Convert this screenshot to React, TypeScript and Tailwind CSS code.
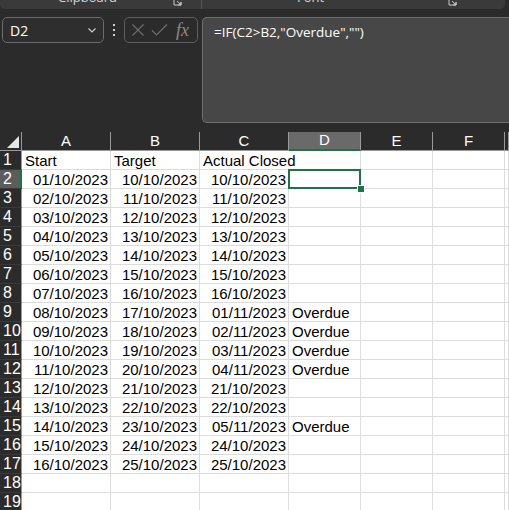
import React from 'react';

const starts = Array.from({ length: 16 }, (_, i) => `${String(i + 1).padStart(2, '0')}/10/2023`);
const targets = Array.from({ length: 16 }, (_, i) => `${String(i + 10).padStart(2, '0')}/10/2023`);
const actuals = [
  '10/10/2023', '11/10/2023', '12/10/2023', '13/10/2023', '14/10/2023', '15/10/2023', '16/10/2023',
  '01/11/2023', '02/11/2023', '03/11/2023', '04/11/2023', '21/10/2023', '22/10/2023', '05/11/2023',
  '24/10/2023', '25/10/2023',
];

const toDate = (s: string) => {
  const [d, m, y] = s.split('/').map(Number);
  return new Date(y, m - 1, d).getTime();
};

const cols = ['A', 'B', 'C', 'D', 'E', 'F', ''];

const Launcher = () => (
  <svg width="9" height="9" viewBox="0 0 9 9" className="text-[#c8c8c8]">
    <path d="M1 1h3M1 1v7h7V5" stroke="currentColor" fill="none" strokeWidth="1" />
    <path d="M4 4l4 4M8 5v3H5" stroke="currentColor" fill="none" strokeWidth="1" />
  </svg>
);

export default function App() {
  const rows: string[][] = [['Start', 'Target', 'Actual Closed', '', '', '', '']];
  for (let i = 0; i < 16; i++) {
    rows.push([starts[i], targets[i], actuals[i], toDate(actuals[i]) > toDate(targets[i]) ? 'Overdue' : '', '', '', '']);
  }
  rows.push(['', '', '', '', '', '', '']);
  rows.push(['', '', '', '', '', '', '']);

  return (
    <div className="w-[509px] h-[510px] overflow-hidden bg-[#2b2b2b] flex flex-col" style={{ fontFamily: '"Open Sans", "Noto Sans", sans-serif' }}>
      {/* ribbon bottom edge */}
      <div className="h-[9px] w-[505px] shrink-0 bg-[#3a3a3a] rounded-b-[5px] overflow-hidden flex text-[#d6d6d6] text-[13px] leading-none">
        <div className="w-[202px] border-r border-[#555] flex items-start">
          <span className="ml-[58px] -mt-[9px]">Clipboard</span>
          <span className="ml-[56px] -mt-[3px]"><Launcher /></span>
        </div>
        <div className="flex-1 flex items-start">
          <span className="ml-[95px] -mt-[9px]">Font</span>
          <span className="ml-[124px] -mt-[3px]"><Launcher /></span>
        </div>
      </div>

      {/* formula bar */}
      <div className="flex items-start pt-[8px] shrink-0">
        <div className="ml-[2px] w-[102px] h-[26px] rounded-[5px] border border-[#6b6b6b] bg-[#2e2e2e] flex items-center justify-between pl-[7px] pr-[6px] text-white text-[14px]">
          <span>D2</span>
          <svg width="10" height="10" viewBox="0 0 10 10">
            <path d="M1.5 3.5l3.5 3.5 3.5-3.5" stroke="#d0d0d0" fill="none" strokeWidth="1.1" />
          </svg>
        </div>
        <div className="w-[20px] h-[26px] flex flex-col items-center justify-center gap-[3px]">
          <span className="w-[2px] h-[2px] bg-[#d0d0d0]" />
          <span className="w-[2px] h-[2px] bg-[#d0d0d0]" />
          <span className="w-[2px] h-[2px] bg-[#d0d0d0]" />
        </div>
        <div className="w-[74px] h-[26px] rounded-[5px] border border-[#5e5e5e] flex items-center pl-[6px] gap-[6px]">
          <svg width="14" height="14" viewBox="0 0 14 14">
            <path d="M1.5 1.5l11 11M12.5 1.5l-11 11" stroke="#6e6e6e" strokeWidth="1.1" fill="none" />
          </svg>
          <svg width="17" height="14" viewBox="0 0 17 14">
            <path d="M1 7.5l4.5 4.5L16 1.5" stroke="#6e6e6e" strokeWidth="1.1" fill="none" />
          </svg>
          <span className="italic text-[#8c8c8c] text-[18px] leading-none ml-[2px]" style={{ fontFamily: '"Liberation Serif", serif' }}>fx</span>
        </div>
        <div className="ml-[4px] flex-1 h-[106px] rounded-l-[5px] border border-r-0 border-[#6e6e6e] bg-[#474747] pl-[11px] pt-[4px] text-white text-[13.5px]">
          =IF(C2&gt;B2,"Overdue","")
        </div>
      </div>

      {/* grid */}
      <div className="mt-[9px] grid grid-cols-[22px_89px_89px_89px_72px_72px_72px_1fr] auto-rows-[19px]" style={{ fontFamily: '"Liberation Sans", Arial, sans-serif' }}>
        <div className="bg-[#2b2b2b] border-r border-b border-[#9a9a9a] relative">
          <svg width="12" height="12" viewBox="0 0 12 12" className="absolute right-[2px] bottom-[2px]">
            <path d="M12 0V12H0Z" fill="#e6e6e6" />
          </svg>
        </div>
        {cols.map((c, i) => (
          <div
            key={i}
            className={`flex items-center justify-center text-[15px] border-b border-r ${
              c === 'D'
                ? 'bg-[#6a6a6a] text-white border-b-2 border-b-[#217346] border-r-[#9a9a9a]'
                : 'bg-[#2b2b2b] text-white border-[#9a9a9a]'
            }`}
          >
            {c}
          </div>
        ))}

        {rows.map((r, ri) => (
          <React.Fragment key={ri}>
            <div
              className={`flex items-center pl-[3px] text-[16px] border-b border-b-[#3a3a3a] ${
                ri === 1
                  ? 'bg-[#5c5c5c] text-white border-r-2 border-r-[#217346]'
                  : 'bg-[#2b2b2b] text-white border-r border-r-[#9a9a9a]'
              }`}
            >
              {ri + 1}
            </div>
            {r.map((v, ci) => {
              const isDate = /\d/.test(v);
              const isSel = ri === 1 && ci === 3;
              const overflow = (ri === 0 && ci === 2) || isSel;
              return (
                <div
                  key={ci}
                  className={`relative bg-white border-r border-b border-[#dcdcdc] text-black text-[15px] flex items-center pt-[2px] whitespace-nowrap ${
                    isDate ? 'justify-end pr-[2px]' : 'pl-[3px]'
                  } ${overflow ? 'overflow-visible z-10' : 'overflow-hidden'} ${ri === 0 && ci === 2 ? 'border-r-0' : ''}`}
                >
                  {v}
                  {isSel && (
                    <>
                      <div className="absolute -left-px -top-px -right-px -bottom-px border-2 border-[#217346]" />
                      <div className="absolute -right-[5px] -bottom-[5px] w-[8px] h-[8px] bg-[#217346] border border-white" />
                    </>
                  )}
                </div>
              );
            })}
          </React.Fragment>
        ))}
      </div>
    </div>
  );
}
